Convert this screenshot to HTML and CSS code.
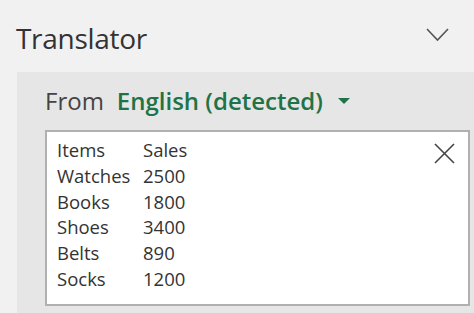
FILE: index.html
```html
<!DOCTYPE html>
<html lang="en">
<head>
    <meta charset="UTF-8">
    <meta name="viewport" content="width=device-width, initial-scale=1.0">
    <title>Translator</title>
    <link rel="stylesheet" href="styles.css">
</head>
<body>
    <header class="pane-header">
        <h1 class="pane-title">Translator</h1>
        <button class="collapse-btn" aria-label="Collapse">
            <svg width="23" height="14" viewBox="0 0 23 14">
                <polyline points="1,1 11.5,12 22,1" fill="none" stroke="#555" stroke-width="1.6"/>
            </svg>
        </button>
    </header>
    <main class="panel">
        <div class="lang-row">
            <span class="lang-label">From</span>
            <span class="lang-name">English (detected)</span>
            <svg class="lang-caret" width="12" height="7" viewBox="0 0 12 7">
                <polygon points="0,0 12,0 6,6" fill="#217346"/>
            </svg>
        </div>
        <div class="source-box">
            <button class="clear-btn" aria-label="Clear">
                <svg width="21" height="21" viewBox="0 0 21 21">
                    <path d="M1 1 L20 20 M20 1 L1 20" stroke="#444" stroke-width="1.6"/>
                </svg>
            </button>
            <table class="source-text">
                <tr><td>Items</td><td>Sales</td></tr>
                <tr><td>Watches</td><td>2500</td></tr>
                <tr><td>Books</td><td>1800</td></tr>
                <tr><td>Shoes</td><td>3400</td></tr>
                <tr><td>Belts</td><td>890</td></tr>
                <tr><td>Socks</td><td>1200</td></tr>
            </table>
        </div>
    </main>
</body>
</html>
```

FILE: styles.css
```css
/* General Styles */
body {
    font-family: 'Open Sans', 'Noto Sans', sans-serif;
    margin: 0;
    padding: 0;
    background-color: #f1f1f1;
    color: #333;
    height: 313px;
    overflow: hidden;
}

.pane-header {
    display: flex;
    align-items: center;
    justify-content: space-between;
    height: 72px;
    padding: 0 25px 0 16px;
}

.pane-title {
    margin: 4px 0 0;
    font-size: 28px;
    font-weight: normal;
    color: #333;
    letter-spacing: -0.3px;
}

.collapse-btn,
.clear-btn {
    border: none;
    background: none;
    padding: 0;
    display: flex;
}

.collapse-btn {
    margin-top: -3px;
}

.panel {
    margin-left: 17px;
    background-color: #e6e6e6;
    padding: 10px 4px 0 28px;
    height: 241px;
    box-sizing: border-box;
}

.lang-row {
    display: flex;
    align-items: center;
    height: 36px;
    font-size: 24px;
    margin-bottom: 12px;
}

.lang-label {
    color: #444;
    margin-right: 13px;
}

.lang-name {
    color: #217346;
    font-weight: 600;
}

.lang-caret {
    margin-left: 15px;
    margin-top: 3px;
}

.source-box {
    position: relative;
    background-color: #fff;
    border: 2px solid #b0b0b0;
    height: 176px;
    padding: 5px 10px;
    box-sizing: border-box;
}

.clear-btn {
    position: absolute;
    top: 11px;
    right: 13px;
}

.source-text {
    border-collapse: collapse;
    font-size: 18.5px;
    color: #333;
}

.source-text td {
    padding: 0;
    height: 25.8px;
    line-height: 25.8px;
}

.source-text td:first-child {
    width: 86px;
}
```
